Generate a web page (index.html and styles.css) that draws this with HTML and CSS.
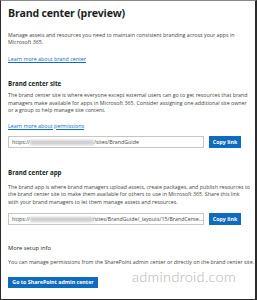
FILE: index.html
```html
<!DOCTYPE html>
<html>
<head>
<meta charset="utf-8">
<link rel="stylesheet" href="styles.css">
</head>
<body>
<div class="frame">
  <h1 class="title">Brand center (preview)</h1>
  <p class="text desc">Manage assets and resources you need to maintain consistent branding across your apps in Microsoft 365.</p>
  <a class="link first-link" href="#">Learn more about brand center</a>

  <h2 class="heading site-heading">Brand center site</h2>
  <p class="text">The brand center site is where everyone except external users can go to get resources that brand managers make available for apps in Microsoft 365. Consider assigning one additional site owner or a group to help manage site content.</p>
  <a class="link perm-link" href="#">Learn more about permissions</a>
  <div class="url-row">
    <div class="url-box"><span>https://</span><span class="blur"></span><span>/sites/BrandGuide</span></div>
    <button class="btn copy">Copy link</button>
  </div>

  <h2 class="heading app-heading">Brand center app</h2>
  <p class="text">The brand app is where brand managers upload assets, create packages, and publish resources to the brand center site to make them available for others to use in Microsoft 365. Share this link with your brand managers to let them manage assets and resources.</p>
  <div class="url-row app-row">
    <div class="url-box"><span>https://</span><span class="blur"></span><span>/sites/BrandGuide/_layouts/15/BrandCente...</span></div>
    <button class="btn copy">Copy link</button>
  </div>

  <h3 class="sub">More setup info</h3>
  <p class="text setup">You can manage permissions from the SharePoint admin center or directly on the brand center site.</p>
  <button class="btn go">Go to SharePoint admin center</button>

  <div class="watermark">admindroid.com</div>
</div>
</body>
</html>
```

FILE: styles.css
```css
html, body {
  margin: 0;
  padding: 0;
  background: #fff;
}
.frame {
  position: relative;
  box-sizing: border-box;
  width: 257px;
  height: 300px;
  border: 1px solid #2b2b2b;
  border-top-color: #8a8a8a;
  border-right-width: 2px;
  padding: 0 0 0 7px;
  font-family: "Open Sans", "Noto Sans", sans-serif;
  color: #323130;
  display: flex;
  flex-direction: column;
  align-items: flex-start;
}
.title {
  margin: 4px 0 0 0;
  font-size: 10.6px;
  line-height: 16px;
  font-weight: 700;
  letter-spacing: -0.2px;
  color: #201f1e;
}
.text {
  margin: 0;
  width: 242px;
  font-size: 5.3px;
  line-height: 7.4px;
  color: #444;
}
.desc {
  margin-top: 11px;
  width: 238px;
}
.setup {
  width: 247px;
  white-space: nowrap;
}
.link {
  font-size: 5.3px;
  line-height: 7.5px;
  color: #0f6cbd;
  text-decoration: underline;
}
.first-link { margin-top: 9px; }
.perm-link { margin-top: 8px; }
.heading {
  margin: 0 0 4px 0;
  font-size: 6.2px;
  line-height: 8px;
  font-weight: 700;
  color: #201f1e;
}
.site-heading { margin-top: 17px; }
.app-heading { margin-top: 21px; margin-bottom: 7px; }
.url-row {
  display: flex;
  align-items: center;
  gap: 5px;
  margin-top: 6px;
}
.app-row { margin-top: 7px; }
.url-box {
  box-sizing: border-box;
  width: 196px;
  height: 12px;
  border: 1px solid #c8c6c4;
  display: flex;
  align-items: center;
  padding-left: 3px;
  font-size: 5.3px;
  color: #444;
  white-space: nowrap;
  overflow: hidden;
}
.blur {
  display: inline-block;
  width: 64px;
  height: 5px;
  background: #cfcfcf;
  filter: blur(1px);
}
.btn {
  border: 0;
  margin: 0;
  background: #0f6cbd;
  color: #fff;
  font-family: "Open Sans", "Noto Sans", sans-serif;
  font-weight: 700;
  font-size: 5.3px;
  padding: 0;
}
.copy {
  width: 32px;
  height: 12px;
}
.sub {
  margin: 19px 0 0 0;
  font-size: 5.8px;
  line-height: 8px;
  font-weight: 400;
  color: #201f1e;
}
.sub + .text { margin-top: 7px; }
.go {
  margin-top: 10px;
  width: 90px;
  height: 11px;
}
.watermark {
  position: absolute;
  left: 131px;
  top: 267px;
  font-family: "Lato", "Noto Sans", sans-serif;
  font-weight: 300;
  font-size: 14.5px;
  letter-spacing: 0.3px;
  color: #b4b4b4;
}
```
